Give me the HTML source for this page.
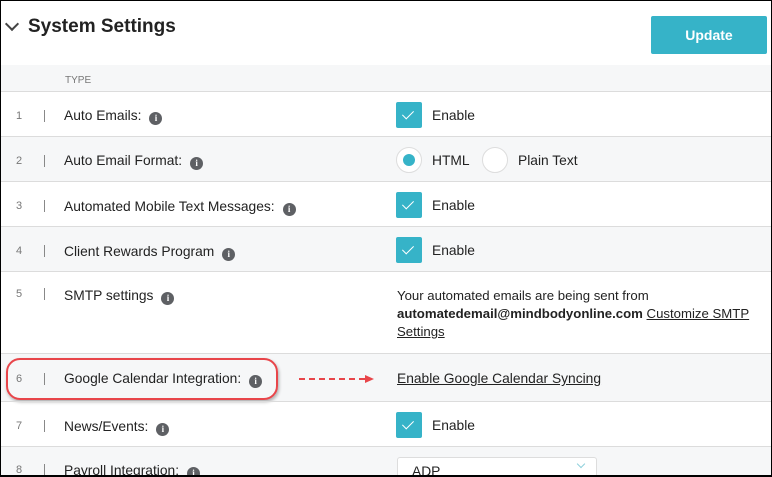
<!DOCTYPE html><html><head><style>
body{margin:0;width:772px;height:476px;overflow:hidden;font-family:"Liberation Sans",sans-serif;color:#222;}
#f{position:absolute;left:0;top:0;width:770px;height:474px;border:1px solid #000;border-width:1px 1px 2px 1px;background:#fff;overflow:hidden}
.a{position:absolute}
.row{position:absolute;left:0;width:770px;border-top:1px solid #dcdcdc}
.g{background:#f6f7f8}
.n{position:absolute;left:15px;font-size:11px;color:#777}
.bar{position:absolute;left:43px;width:1px;height:12px;background:#888}
.l{position:absolute;left:63px;font-size:13.8px;white-space:nowrap}
.i{display:inline-block;width:13px;height:13px;border-radius:50%;background:#5e6064;color:#fff;font-size:9px;font-weight:bold;text-align:center;line-height:13px;vertical-align:-1px;margin-left:8px;font-family:"Liberation Serif",serif}
.cb{position:absolute;left:395px;width:26px;height:26px;background:#36b3c8;border-radius:2px}
.cb:after{content:"";position:absolute;left:9px;top:6px;width:5px;height:10px;border:solid #fff;border-width:0 1.5px 1.5px 0;transform:rotate(45deg)}
.t{position:absolute;left:431px;font-size:13.8px}
u{text-decoration:underline}
</style></head><body><div id="f">
<div class="a" style="left:6px;top:18px;width:8px;height:8px;border:solid #444;border-width:0 2px 2px 0;transform:rotate(45deg)"></div>
<div class="a" style="left:27px;top:15px;font-size:19px;font-weight:bold;color:#222">System Settings</div>
<div class="a" style="left:650px;top:15px;width:116px;height:38px;background:#36b3c8;border-radius:2px;color:#fff;font-weight:bold;font-size:14px;text-align:center;line-height:38px">Update</div>
<div class="a g" style="left:0;top:64px;width:770px;height:26px"></div>
<div class="a" style="left:64px;top:74px;font-size:10px;color:#777">TYPE</div>

<div class="row" style="top:90px;height:44px"></div>
<div class="n" style="top:109px">1</div><div class="bar" style="top:109px"></div><div class="l" style="top:107px">Auto Emails:<span class="i">i</span></div>
<div class="cb" style="top:101px"></div><div class="t" style="top:107px">Enable</div>

<div class="row g" style="top:135px;height:44px"></div>
<div class="n" style="top:154px">2</div><div class="bar" style="top:154px"></div><div class="l" style="top:152px">Auto Email Format:<span class="i">i</span></div>
<div class="a" style="left:395px;top:146px;width:24px;height:24px;border:1px solid #ddd;border-radius:50%;background:#fff"></div>
<div class="a" style="left:402px;top:153px;width:12px;height:12px;border-radius:50%;background:#36b3c8"></div>
<div class="t" style="top:152px">HTML</div>
<div class="a" style="left:481px;top:146px;width:24px;height:24px;border:1px solid #ddd;border-radius:50%;background:#fff"></div>
<div class="a" style="left:517px;top:152px;font-size:13.8px">Plain Text</div>

<div class="row" style="top:180px;height:44px"></div>
<div class="n" style="top:199px">3</div><div class="bar" style="top:199px"></div><div class="l" style="top:198px">Automated Mobile Text Messages:<span class="i">i</span></div>
<div class="cb" style="top:191px"></div><div class="t" style="top:197px">Enable</div>

<div class="row g" style="top:225px;height:44px"></div>
<div class="n" style="top:244px">4</div><div class="bar" style="top:244px"></div><div class="l" style="top:243px">Client Rewards Program<span class="i">i</span></div>
<div class="cb" style="top:236px"></div><div class="t" style="top:242px">Enable</div>

<div class="row" style="top:270px;height:81px"></div>
<div class="n" style="top:287px">5</div><div class="bar" style="top:287px"></div><div class="l" style="top:287px">SMTP settings<span class="i">i</span></div>
<div class="a" style="left:396px;top:286px;font-size:13.2px;line-height:18px;width:372px">Your automated emails are being sent from<br><b>automatedemail@mindbodyonline.com</b> <u>Customize SMTP</u><br><u>Settings</u></div>

<div class="row g" style="top:352px;height:47px"></div>
<div class="n" style="top:372px">6</div><div class="bar" style="top:372px"></div><div class="l" style="top:370px">Google Calendar Integration:<span class="i">i</span></div>
<div class="a" style="left:396px;top:370px;font-size:13.8px"><u>Enable Google Calendar Syncing</u></div>
<div class="a" style="left:5px;top:357px;width:268px;height:38px;border:2.5px solid #e8454a;border-radius:14px;box-shadow:1px 2px 3px rgba(0,0,0,.3)"></div>
<div class="a" style="left:298px;top:377px;width:66px;border-top:2.5px dashed #e8454a"></div>
<div class="a" style="left:364px;top:374px;width:0;height:0;border-left:9px solid #e8454a;border-top:4px solid transparent;border-bottom:4px solid transparent"></div>

<div class="row" style="top:400px;height:44px"></div>
<div class="n" style="top:419px">7</div><div class="bar" style="top:419px"></div><div class="l" style="top:418px">News/Events:<span class="i">i</span></div>
<div class="cb" style="top:411px"></div><div class="t" style="top:417px">Enable</div>

<div class="row g" style="top:445px;height:40px"></div>
<div class="n" style="top:463px">8</div><div class="bar" style="top:463px"></div><div class="l" style="top:462px">Payroll Integration:<span class="i">i</span></div>
<div class="a" style="left:396px;top:456px;width:198px;height:30px;border:1px solid #ddd;border-radius:3px;background:#fff"></div>
<div class="a" style="left:411px;top:463px;font-size:13.8px">ADP</div>
<div class="a" style="left:577px;top:460px;width:5px;height:5px;border:solid #8fd0dc;border-width:0 1px 1px 0;transform:rotate(45deg)"></div>
</div></body></html>
